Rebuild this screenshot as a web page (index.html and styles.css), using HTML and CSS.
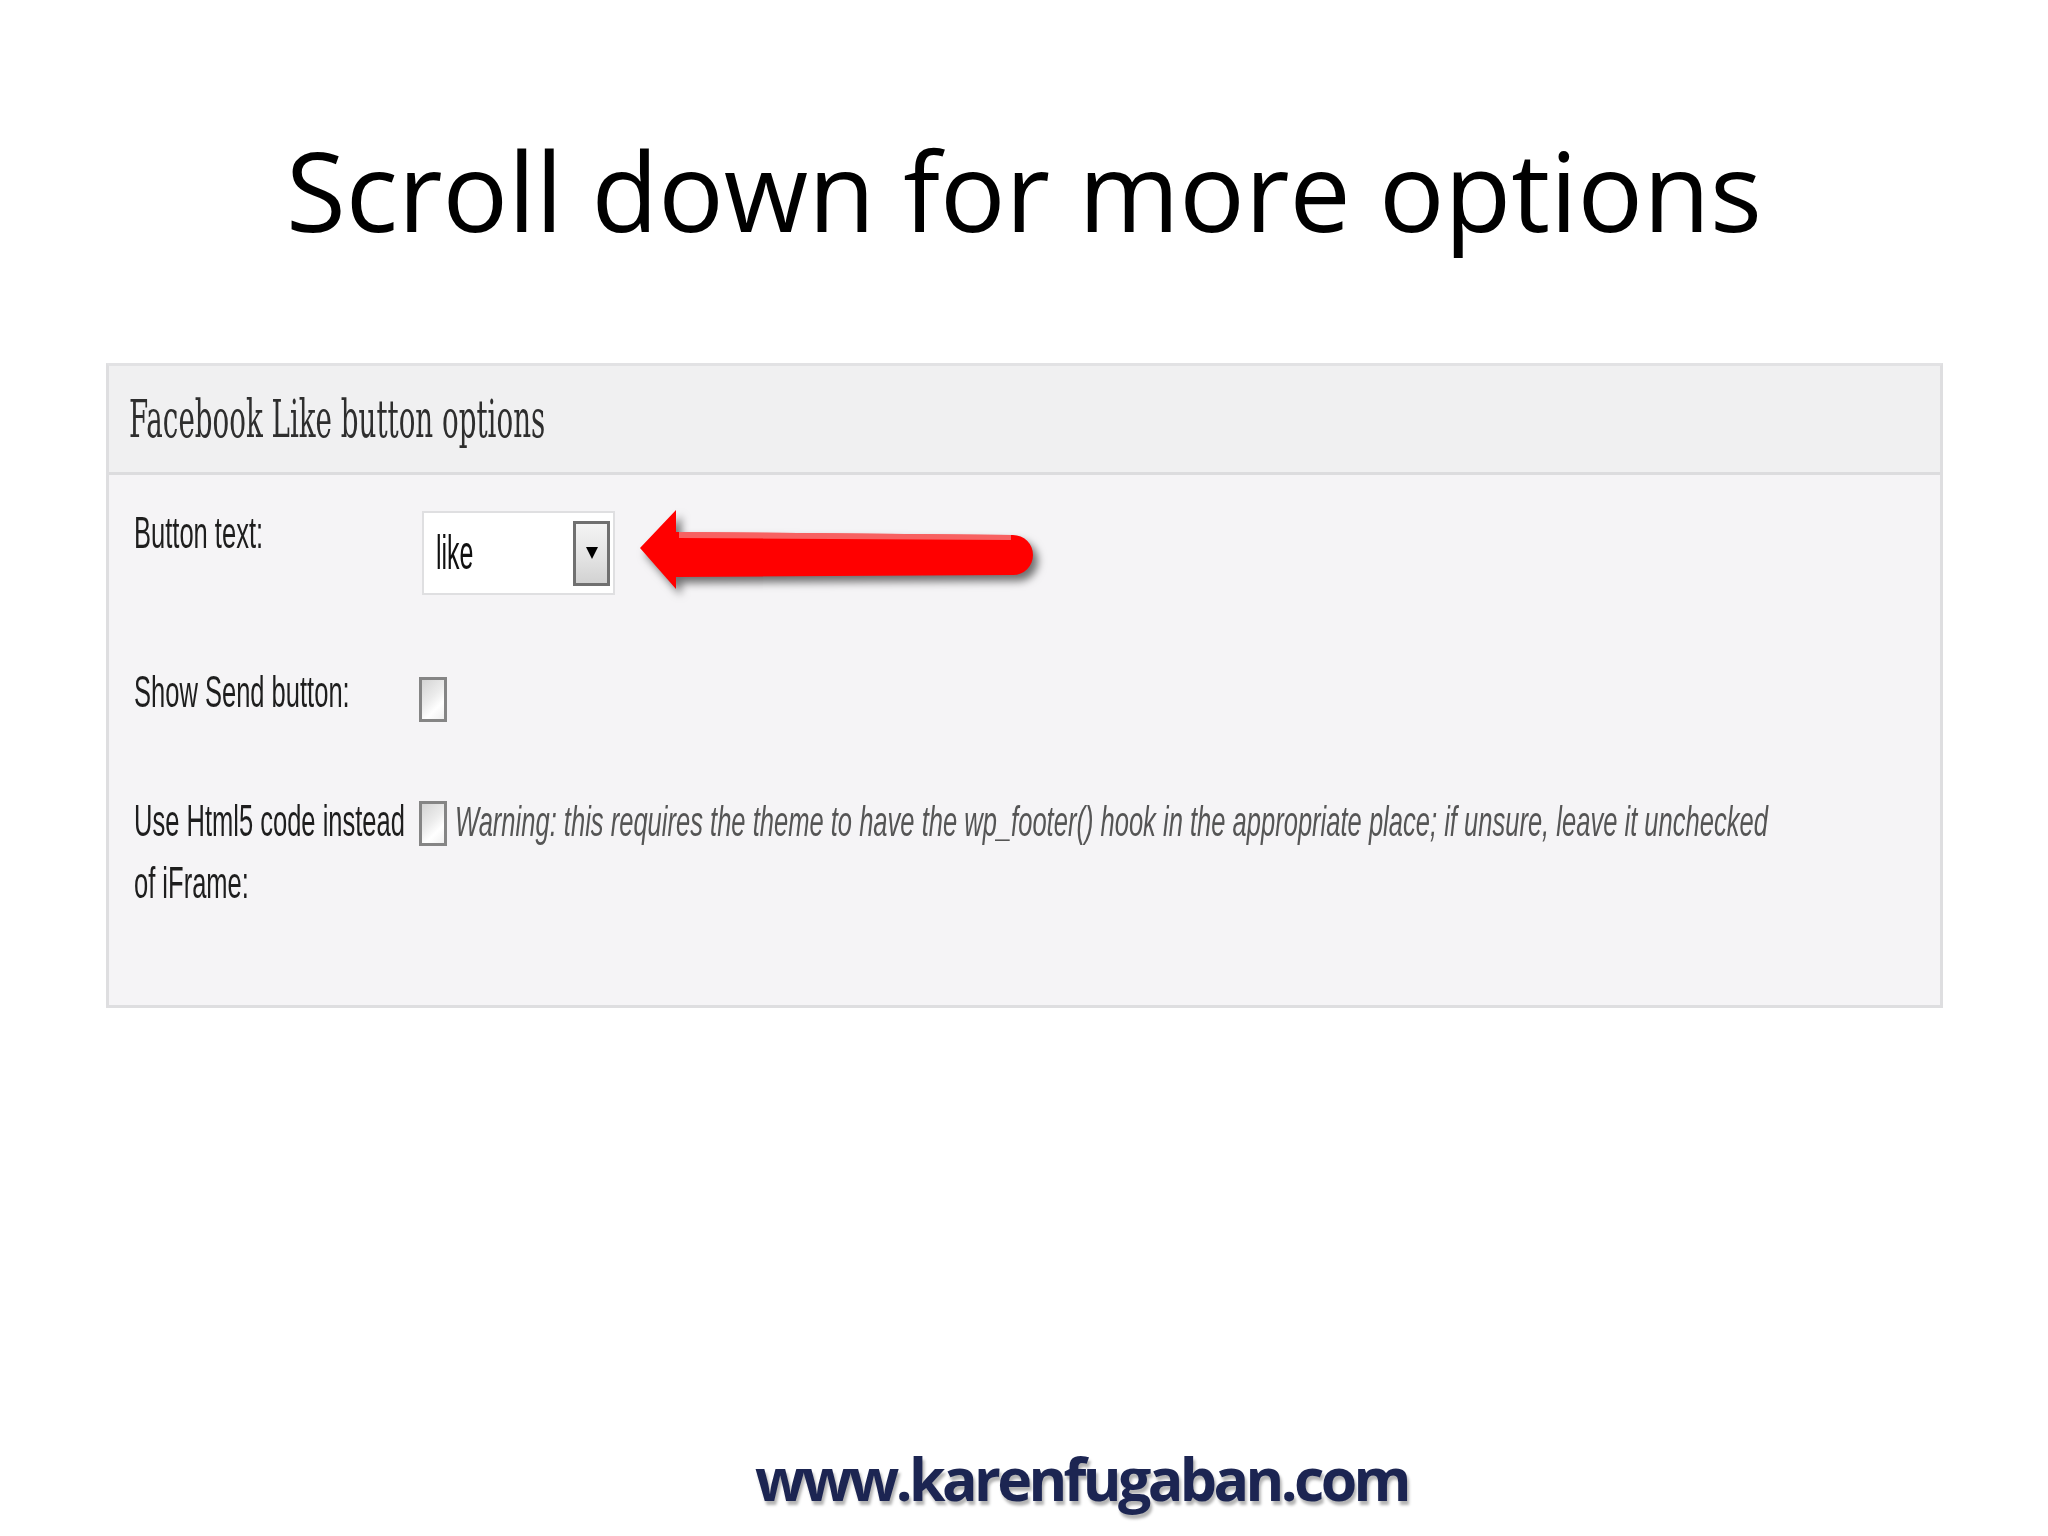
FILE: index.html
```html
<!DOCTYPE html>
<html lang="en">
<head>
<meta charset="utf-8">
<title>Scroll down for more options</title>
<link rel="stylesheet" href="styles.css">
</head>
<body>
<div class="slide">
  <h1 class="title">Scroll down for more options</h1>

  <section class="panel">
    <div class="panel-head">
      <span class="head-text">Facebook Like button options</span>
    </div>
    <div class="panel-body">
      <div class="row row-text">
        <div class="label"><span class="squeeze">Button text:</span></div>
        <div class="control">
          <div class="select">
            <span class="select-value">like</span>
            <span class="select-btn"><span class="tri"></span></span>
          </div>
          <svg class="arrow" width="420" height="110" viewBox="0 0 420 110" aria-hidden="true">
            <path d="M5 46 L41 8 L41 30 L378 33 A20 20 0 0 1 378 73 L41 75 L41 87 Z" fill="#ff0000"/>
            <path d="M44 30 L376 33 L376 38 L44 36 Z" fill="#f48a8a" opacity="0.7"/>
          </svg>
        </div>
      </div>

      <div class="row row-send">
        <div class="label"><span class="squeeze">Show Send button:</span></div>
        <div class="control">
          <span class="checkbox cb-send"></span>
        </div>
      </div>

      <div class="row row-html5">
        <div class="label"><span class="squeeze">Use Html5 code instead<br>of iFrame:</span></div>
        <div class="control">
          <span class="checkbox cb-html5"></span>
          <span class="warning">Warning: this requires the theme to have the wp_footer() hook in the appropriate place; if unsure, leave it unchecked</span>
        </div>
      </div>
    </div>
  </section>

  <footer class="site">www.karenfugaban.com</footer>
</div>
</body>
</html>
```

FILE: styles.css
```css
html, body {
  margin: 0;
  padding: 0;
  background: #ffffff;
}

.slide {
  width: 2048px;
  height: 1536px;
  overflow: hidden;
  box-sizing: border-box;
  padding-top: 136px;
}

.title {
  margin: 0;
  font-family: "Open Sans", "Noto Sans", sans-serif;
  font-weight: 400;
  font-size: 109px;
  line-height: 108px;
  text-align: center;
  color: #000;
}

.panel {
  margin: 119px 0 0 106px;
  width: 1837px;
  box-sizing: border-box;
  border: 3px solid #dedee0;
  border-top-color: #e2e2e4;
  background: #f5f4f6;
}

.panel-head {
  height: 109px;
  box-sizing: border-box;
  padding: 27px 0 0 20px;
  background: #f0f0f1;
  border-bottom: 3px solid #dcdcde;
}

.head-text {
  display: inline-block;
  font-family: "DejaVu Serif", "Liberation Serif", serif;
  font-size: 52px;
  line-height: 52px;
  color: #2e2e2e;
  white-space: nowrap;
  transform: scaleX(0.533);
  transform-origin: 0 0;
}

.panel-body {
  display: flex;
  flex-direction: column;
  padding: 27px 0 91px 25px;
}

.row {
  display: flex;
  align-items: flex-start;
}

.row-send {
  margin-top: 66px;
}

.row-html5 {
  margin-top: 67px;
}

.label {
  flex: 0 0 285px;
  min-width: 0;
  font-family: "Liberation Sans", Arial, sans-serif;
  font-size: 44px;
  line-height: 62px;
  color: #1e1e1e;
  white-space: nowrap;
}

.squeeze {
  display: inline-block;
  transform: scaleX(0.58);
  transform-origin: 0 0;
  white-space: nowrap;
}

.control {
  display: flex;
  align-items: flex-start;
  min-width: 0;
}

/* select */
.select {
  flex: none;
  margin: 9px 0 0 3px;
  width: 193px;
  height: 84px;
  box-sizing: border-box;
  border: 2px solid #dfdfe1;
  background: #ffffff;
  display: flex;
  align-items: center;
  justify-content: space-between;
  padding: 0 3px 0 12px;
}

.select-value {
  display: inline-block;
  font-family: "Liberation Sans", Arial, sans-serif;
  font-size: 48px;
  line-height: 48px;
  color: #111;
  transform: scaleX(0.52);
  transform-origin: 0 50%;
}

.select-btn {
  width: 37px;
  height: 65px;
  box-sizing: border-box;
  border: 3px solid #707070;
  background: linear-gradient(180deg, #f4f4f4 0%, #e2e2e2 60%, #d2d2d2 100%);
  display: flex;
  align-items: center;
  justify-content: center;
}

.tri {
  width: 0;
  height: 0;
  border-left: 6px solid transparent;
  border-right: 6px solid transparent;
  border-top: 12px solid #000;
}

.arrow {
  display: block;
  flex: none;
  margin: 0 0 -17px 20px;
  filter: drop-shadow(5px 6px 4px rgba(0, 0, 0, 0.55));
}

/* checkboxes */
.checkbox {
  display: block;
  flex: none;
  width: 28px;
  height: 45px;
  box-sizing: border-box;
  border: 3px solid #858585;
  background: linear-gradient(135deg, #d4d4d4 0%, #ececec 45%, #ffffff 70%, #f0f0f0 100%);
}

.cb-send {
  margin-top: 16px;
}

.cb-html5 {
  margin-top: 11px;
}

.warning {
  display: inline-block;
  margin-left: 8px;
  font-family: "Liberation Sans", Arial, sans-serif;
  font-style: italic;
  font-size: 43px;
  line-height: 62px;
  color: #555555;
  white-space: nowrap;
  transform: scaleX(0.594);
  transform-origin: 0 0;
}

.site {
  margin: 441px 0 0 755px;
  font-family: "Open Sans", "Noto Sans", sans-serif;
  font-weight: 700;
  font-size: 59px;
  line-height: 59px;
  letter-spacing: -3.6px;
  color: #1c2552;
  text-shadow: 2px 4px 3px rgba(0, 0, 0, 0.3);
  white-space: nowrap;
}
```
